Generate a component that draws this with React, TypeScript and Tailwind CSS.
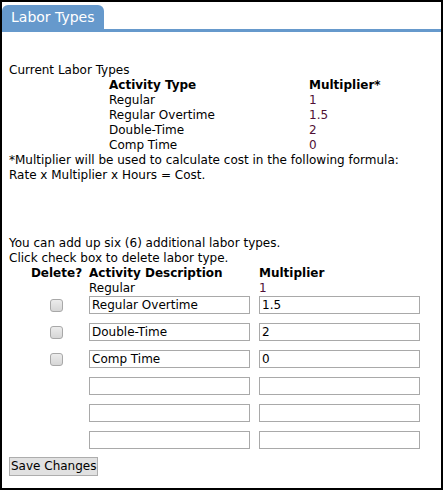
import React from "react";

const current = [
  { name: "Regular", mult: "1" },
  { name: "Regular Overtime", mult: "1.5" },
  { name: "Double-Time", mult: "2" },
  { name: "Comp Time", mult: "0" },
];

const editable = [
  { name: "Regular Overtime", mult: "1.5", box: true },
  { name: "Double-Time", mult: "2", box: true },
  { name: "Comp Time", mult: "0", box: true },
  { name: "", mult: "", box: false },
  { name: "", mult: "", box: false },
  { name: "", mult: "", box: false },
];

export default function App() {
  return (
    <div className="w-[443px] h-[490px] border-2 border-black bg-white text-black font-['DejaVu_Sans',sans-serif] text-[12px] leading-[15px]">
      {/* Tab header */}
      <div className="flex pt-[3px] border-b-[3px] border-[#6699cc]">
        <div className="h-[24px] px-[9px] bg-[#6699cc] text-white text-[14px] leading-[24px] rounded-t-[6px]">
          Labor Types
        </div>
      </div>

      <div className="pl-[7px] pt-[31px]">
        <div>Current Labor Types</div>
        <div className="ml-[100px] grid grid-cols-[200px_auto]">
          <div className="font-bold">Activity Type</div>
          <div className="font-bold">Multiplier*</div>
          {current.map((c) => (
            <React.Fragment key={c.name}>
              <div>{c.name}</div>
              <div className="text-[#501035]">{c.mult}</div>
            </React.Fragment>
          ))}
        </div>
        <div>*Multiplier will be used to calculate cost in the following formula:</div>
        <div>Rate x Multiplier x Hours = Cost.</div>

        <div className="mt-[53px]">You can add up six (6) additional labor types.</div>
        <div>Click check box to delete labor type.</div>

        <div className="ml-[20px]">
          <div className="flex">
            <div className="w-[55px] text-center font-bold">Delete?</div>
            <div className="ml-[5px] w-[161px] font-bold">Activity Description</div>
            <div className="ml-[9px] w-[161px] font-bold">Multiplier</div>
          </div>
          <div className="flex">
            <div className="w-[55px]" />
            <div className="ml-[5px] w-[161px]">Regular</div>
            <div className="ml-[9px] w-[161px] text-[#501035]">1</div>
          </div>
          <div className="flex flex-col gap-[9px]">
            {editable.map((r, i) => (
              <div key={i} className="flex items-center h-[18px]">
                <div className="w-[55px] flex justify-center">
                  {r.box && (
                    <input
                      type="checkbox"
                      className="appearance-none w-[13px] h-[13px] rounded-[3px] border border-[#a8a8a8] bg-gradient-to-b from-[#ececec] to-[#d6d6d6]"
                    />
                  )}
                </div>
                <input
                  type="text"
                  defaultValue={r.name}
                  className="ml-[5px] w-[161px] h-[18px] border border-[#a9a9a9] px-[2px] text-[12px] leading-[16px] outline-none"
                />
                <input
                  type="text"
                  defaultValue={r.mult}
                  className="ml-[9px] w-[161px] h-[18px] border border-[#a9a9a9] px-[2px] text-[12px] leading-[16px] outline-none"
                />
              </div>
            ))}
          </div>
        </div>

        <button className="mt-[8px] h-[19px] px-[1px] border border-[#adadad] bg-[#e1e1e1] text-[12px] leading-[17px] text-black">
          Save Changes
        </button>
      </div>
    </div>
  );
}
